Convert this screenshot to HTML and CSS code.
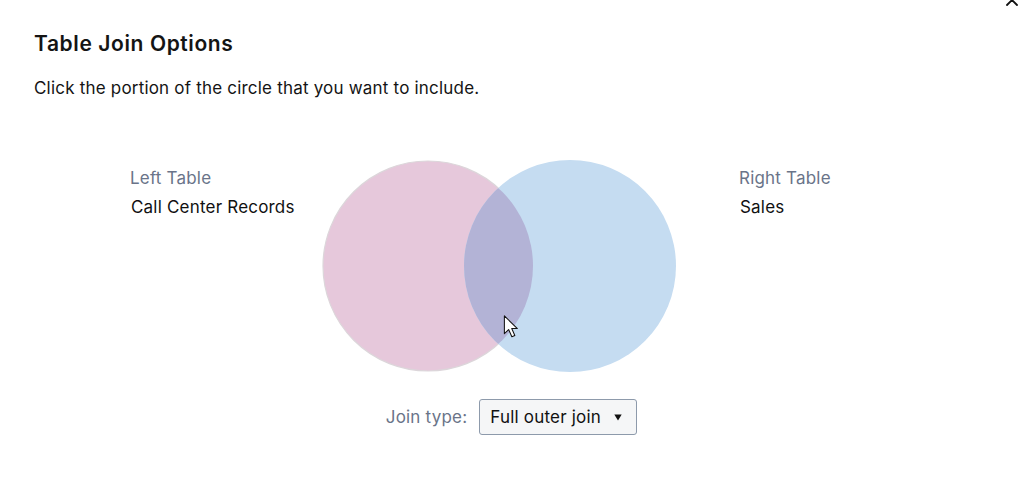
FILE: index.html
```html
<!DOCTYPE html>
<html>
<head>
<meta charset="utf-8">
<link rel="stylesheet" href="styles.css">
</head>
<body>
<div class="dialog">
  <button class="close" aria-label="Close">
    <svg width="14" height="14" viewBox="0 0 14 14"><path d="M2 2 L12 12 M12 2 L2 12" stroke="#111" stroke-width="1.8" stroke-linecap="round"/></svg>
  </button>
  <h1 class="title">Table Join Options</h1>
  <p class="subtitle">Click the portion of the circle that you want to include.</p>
  <div class="venn-row">
    <div class="table-info left">
      <div class="table-label">Left Table</div>
      <div class="table-name">Call Center Records</div>
    </div>
    <svg class="venn" width="356" height="216" viewBox="0 0 356 216">
      <defs>
        <clipPath id="clipLeft"><circle cx="107" cy="108" r="105"/></clipPath>
      </defs>
      <circle cx="107" cy="108" r="105" fill="#e6c8db" stroke="#dcd6da" stroke-width="1.2"/>
      <circle cx="249" cy="108" r="106" fill="#c5dcf1"/>
      <circle cx="249" cy="108" r="106" fill="#b3b3d6" clip-path="url(#clipLeft)"/>
      <path transform="translate(182.8 157.3) scale(1.15)" d="M0.5 0.5 L0.5 16 L4.2 12.4 L7 18.6 L9.6 17.5 L6.9 11.5 L11.8 11.5 Z" fill="#fff" stroke="#111" stroke-width="0.9" stroke-linejoin="round"/>
    </svg>
    <div class="table-info right">
      <div class="table-label">Right Table</div>
      <div class="table-name">Sales</div>
    </div>
  </div>
  <div class="join-row">
    <span class="join-label">Join type:</span>
    <div class="select">
      <span class="select-text">Full outer join</span>
      <svg class="caret" width="8" height="7" viewBox="0 0 8 7"><path d="M0.3 0.5 L7.7 0.5 L4 6.5 Z" fill="#111"/></svg>
    </div>
  </div>
</div>
</body>
</html>
```

FILE: styles.css
```css
* { box-sizing: border-box; }
html, body { margin: 0; padding: 0; background: #fff; }
body {
  font-family: "Inter", "Lato", sans-serif;
  color: #141414;
  width: 1023px;
  height: 482px;
  overflow: hidden;
}
.dialog {
  position: relative;
  padding: 30px 34px 0 34px;
}
.close {
  position: absolute;
  top: -7px;
  right: 4px;
  background: none;
  border: 0;
  padding: 0;
  width: 14px;
  height: 14px;
}
.title {
  margin: 0;
  font-size: 21px;
  font-weight: 600;
  letter-spacing: 0.6px;
  line-height: 28px;
}
.subtitle {
  margin: 18px 0 0 0;
  font-size: 17px;
  letter-spacing: 0.2px;
  line-height: 24px;
}
.venn-row {
  display: flex;
  align-items: flex-start;
  margin-top: 58px;
  padding-left: 96px;
}
.table-info {
  padding-top: 6px;
  font-size: 17px;
  letter-spacing: 0.2px;
}
.table-info.left { width: 191px; padding-left: 1px; }
.table-info.right { margin-left: 63px; }
.table-label {
  line-height: 29px;
  color: #6a7489;
  margin-left: -1px;
}
.table-name {
  line-height: 29px;
  color: #111;
}
.venn { display: block; }
.join-row {
  display: flex;
  align-items: center;
  justify-content: center;
  gap: 12px;
  margin-top: 25px;
  font-size: 17px;
  letter-spacing: 0.2px;
}
.join-label {
  color: #6a7489;
}
.select {
  display: flex;
  align-items: center;
  width: 158px;
  height: 36px;
  padding: 0 0 0 10px;
  border: 1px solid #8d9aab;
  border-radius: 3px;
  background: #f5f6f7;
  color: #111;
}
.caret {
  display: block;
  margin-left: 13px;
}
```
